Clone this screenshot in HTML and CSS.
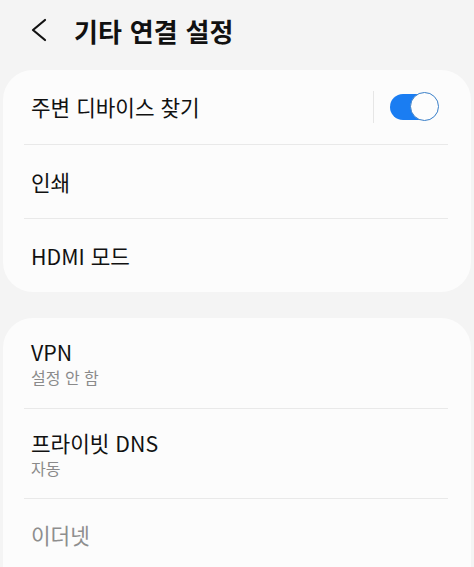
FILE: index.html
```html
<!DOCTYPE html>
<html lang="ko">
<head>
<meta charset="utf-8">
<link rel="stylesheet" href="styles.css">
</head>
<body>
<header class="topbar">
  <svg class="back" width="20" height="26" viewBox="0 0 20 26">
    <polyline points="14,3 2,13 14,23" fill="none" stroke="#111" stroke-width="2.2" stroke-linecap="round" stroke-linejoin="round"/>
  </svg>
  <h1 class="title">기타 연결 설정</h1>
</header>
<section class="card">
  <div class="row">
    <span class="label">주변 디바이스 찾기</span>
    <div class="switch-wrap">
      <span class="sep"></span>
      <span class="switch"><span class="knob"></span></span>
    </div>
  </div>
  <div class="row divided"><span class="label">인쇄</span></div>
  <div class="row divided"><span class="label">HDMI 모드</span></div>
</section>
<section class="card card2">
  <div class="row tall">
    <div class="stack">
      <span class="label">VPN</span>
      <span class="sub">설정 안 함</span>
    </div>
  </div>
  <div class="row tall divided">
    <div class="stack">
      <span class="label">프라이빗 DNS</span>
      <span class="sub">자동</span>
    </div>
  </div>
  <div class="row divided last"><span class="label dim">이더넷</span></div>
</section>
</body>
</html>
```
FILE: styles.css
```css
html, body {
  margin: 0;
  padding: 0;
  background: #f4f4f4;
  font-family: "Noto Sans CJK KR", "Noto Sans", sans-serif;
  color: #111;
  overflow: hidden;
}
.topbar {
  height: 60px;
  display: flex;
  align-items: center;
  padding-left: 31px;
  margin-bottom: 10px;
}
.back {
  display: block;
  margin-right: 23px;
}
.title {
  margin: 0;
  font-size: 26px;
  font-weight: 700;
  letter-spacing: 0.2px;
}
.card {
  margin: 0 3px;
  background: #fcfcfc;
  border-radius: 30px;
  padding: 0 23px 0 21px;
}
.card2 {
  margin-top: 26px;
  border-radius: 30px 30px 0 0;
  height: 260px;
}
.row {
  height: 74px;
  display: flex;
  align-items: center;
  padding-left: 7px;
  box-sizing: border-box;
}
.row.tall {
  height: 90px;
}
.row.last {
  height: 72px;
}
.divided {
  border-top: 1.5px solid #e9e9e9;
}
.label {
  font-size: 21.3px;
  line-height: 28px;
}
.dim {
  color: #8e8e8e;
}
.stack {
  display: flex;
  flex-direction: column;
}
.sub {
  font-size: 16px;
  line-height: 22px;
  color: #8a8a8a;
}
.switch-wrap {
  margin-left: auto;
  display: flex;
  align-items: center;
  margin-right: 10px;
}
.sep {
  width: 1px;
  height: 32px;
  background: #e6e6e6;
  margin-right: 16px;
}
.switch {
  position: relative;
  width: 48px;
  height: 26px;
  border-radius: 13px;
  background: #1a7df2;
}
.knob {
  position: absolute;
  right: -1px;
  top: -2px;
  width: 27px;
  height: 27px;
  border-radius: 50%;
  background: #fdfdfd;
  border: 1.5px solid #3a7fc8;
}
```
